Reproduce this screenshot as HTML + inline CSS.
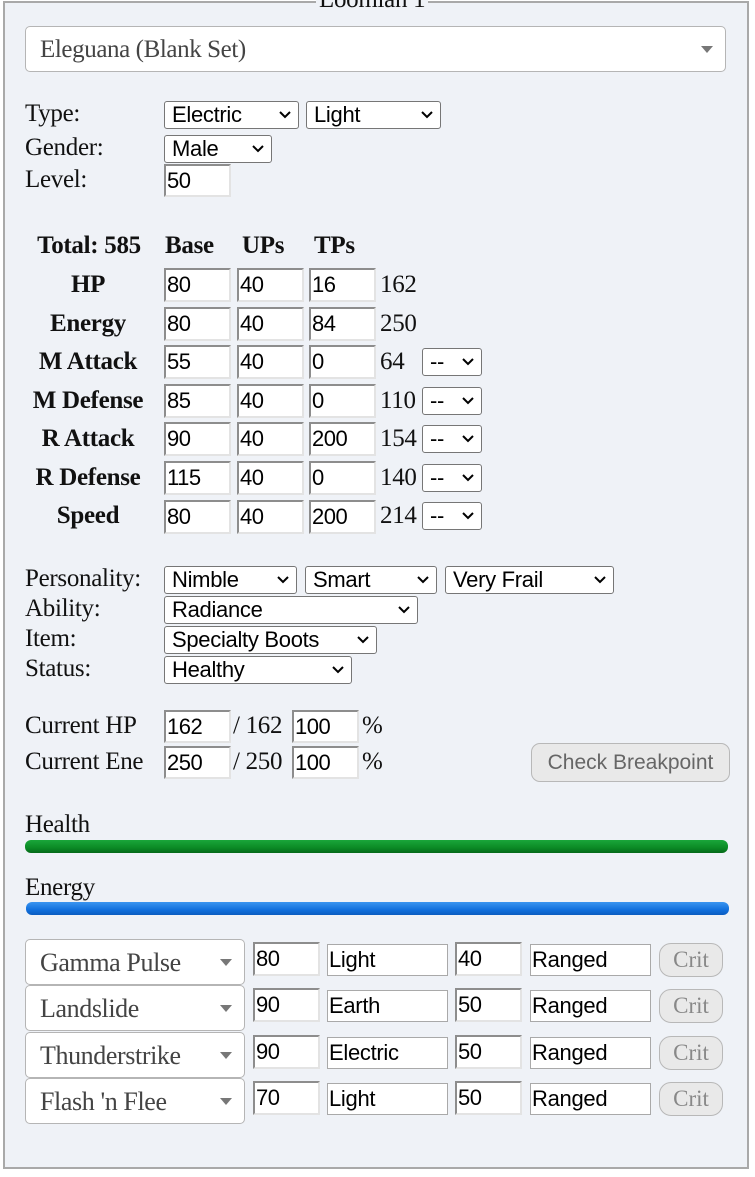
<!DOCTYPE html>
<html><head><meta charset="utf-8"><style>
*{box-sizing:border-box;margin:0;padding:0}
body{width:755px;height:1177px;background:#fff;position:relative;overflow:hidden;font-family:"Liberation Serif",serif;color:#111}
#fs{position:absolute;left:3px;top:1px;width:746px;height:1168px;background:#eff2f7;border:2px solid #a9a9a9}
.a{position:absolute}
.t{position:absolute;font-size:25px;line-height:28px;white-space:nowrap;letter-spacing:-0.3px}
.b{font-weight:bold;text-align:center;font-size:25px}
.s{position:absolute;background:#fff;border:1px solid #767676;border-radius:3px;font-family:"Liberation Sans",sans-serif;font-size:22px;padding-left:7px;white-space:nowrap;color:#000;letter-spacing:-0.3px}
.s svg{position:absolute;right:7px;top:50%;margin-top:-5px}
.i{position:absolute;background:#fff;border:2px solid;border-color:#8d8d8d #e3e3e3 #e3e3e3 #8d8d8d;font-family:"Liberation Sans",sans-serif;font-size:22px;line-height:30px;padding-left:1px;color:#000;letter-spacing:-0.5px}
.f{position:absolute;background:#fff;border:1px solid #a9a9a9;font-family:"Liberation Sans",sans-serif;font-size:22px;line-height:30px;padding-left:1px;color:#000;letter-spacing:-0.3px}
.m{position:absolute;background:#fff;border:1px solid #b5b5b5;border-radius:5px;font-size:26px;color:#444;padding-left:14px;line-height:46px;letter-spacing:-0.4px;white-space:nowrap}
.tri{position:absolute;right:12px;top:50%;margin-top:-3px;width:0;height:0;border-left:6px solid transparent;border-right:6px solid transparent;border-top:7px solid #777}
.c{position:absolute;background:#e9e9e9;border:1px solid #b8b8b8;border-radius:12px;font-size:23px;color:#888;text-align:center;line-height:32px}
</style></head><body>
<div id="fs"></div>
<div class="t" style="left:316px;top:-14px;background:#eff2f7;padding:0 3px">Loomian 1</div>

<div class="m" style="left:25px;top:26px;width:701px;height:46px;font-size:25px">Eleguana (Blank Set)<div class="tri" style="right:12px"></div></div>

<div class="t" style="left:25px;top:100px">Type:</div>
<div class="t" style="left:25px;top:134px">Gender:</div>
<div class="t" style="left:25px;top:166px">Level:</div>
<div class="s" style="left:164px;top:101px;width:135px;height:28px;line-height:26px">Electric<svg width="12" height="10" viewBox="0 0 12 10"><path d="M1 2l5 5 5-5" fill="none" stroke="#000" stroke-width="2"/></svg></div>
<div class="s" style="left:306px;top:101px;width:135px;height:28px;line-height:26px">Light<svg width="12" height="10" viewBox="0 0 12 10"><path d="M1 2l5 5 5-5" fill="none" stroke="#000" stroke-width="2"/></svg></div>
<div class="s" style="left:164px;top:135px;width:108px;height:28px;line-height:26px">Male<svg width="12" height="10" viewBox="0 0 12 10"><path d="M1 2l5 5 5-5" fill="none" stroke="#000" stroke-width="2"/></svg></div>
<div class="i" style="left:164px;top:164px;width:67px;height:33px">50</div>

<div class="t b" style="left:30px;top:232px;width:118px">Total: 585</div>
<div class="t b" style="left:165px;top:232px">Base</div>
<div class="t b" style="left:242px;top:232px">UPs</div>
<div class="t b" style="left:314px;top:232px">TPs</div>

<div class="t b" style="left:20px;top:271px;width:136px">HP</div>
<div class="i" style="left:164px;top:268px;width:67px;height:34px">80</div><div class="i" style="left:237px;top:268px;width:67px;height:34px">40</div><div class="i" style="left:309px;top:268px;width:67px;height:34px">16</div><div class="t" style="left:380px;top:271px">162</div>

<div class="t b" style="left:20px;top:310px;width:136px">Energy</div>
<div class="i" style="left:164px;top:307px;width:67px;height:34px">80</div><div class="i" style="left:237px;top:307px;width:67px;height:34px">40</div><div class="i" style="left:309px;top:307px;width:67px;height:34px">84</div><div class="t" style="left:380px;top:310px">250</div>

<div class="t b" style="left:20px;top:348px;width:136px">M Attack</div>
<div class="i" style="left:164px;top:345px;width:67px;height:34px">55</div><div class="i" style="left:237px;top:345px;width:67px;height:34px">40</div><div class="i" style="left:309px;top:345px;width:67px;height:34px">0</div><div class="t" style="left:380px;top:348px">64</div>
<div class="s" style="left:422px;top:348px;width:60px;height:28px;line-height:26px">--<svg width="12" height="10" viewBox="0 0 12 10"><path d="M1 2l5 5 5-5" fill="none" stroke="#000" stroke-width="2"/></svg></div>

<div class="t b" style="left:20px;top:387px;width:136px">M Defense</div>
<div class="i" style="left:164px;top:384px;width:67px;height:34px">85</div><div class="i" style="left:237px;top:384px;width:67px;height:34px">40</div><div class="i" style="left:309px;top:384px;width:67px;height:34px">0</div><div class="t" style="left:380px;top:387px">110</div>
<div class="s" style="left:422px;top:387px;width:60px;height:28px;line-height:26px">--<svg width="12" height="10" viewBox="0 0 12 10"><path d="M1 2l5 5 5-5" fill="none" stroke="#000" stroke-width="2"/></svg></div>

<div class="t b" style="left:20px;top:425px;width:136px">R Attack</div>
<div class="i" style="left:164px;top:422px;width:67px;height:34px">90</div><div class="i" style="left:237px;top:422px;width:67px;height:34px">40</div><div class="i" style="left:309px;top:422px;width:67px;height:34px">200</div><div class="t" style="left:380px;top:425px">154</div>
<div class="s" style="left:422px;top:425px;width:60px;height:28px;line-height:26px">--<svg width="12" height="10" viewBox="0 0 12 10"><path d="M1 2l5 5 5-5" fill="none" stroke="#000" stroke-width="2"/></svg></div>

<div class="t b" style="left:20px;top:464px;width:136px">R Defense</div>
<div class="i" style="left:164px;top:461px;width:67px;height:34px">115</div><div class="i" style="left:237px;top:461px;width:67px;height:34px">40</div><div class="i" style="left:309px;top:461px;width:67px;height:34px">0</div><div class="t" style="left:380px;top:464px">140</div>
<div class="s" style="left:422px;top:464px;width:60px;height:28px;line-height:26px">--<svg width="12" height="10" viewBox="0 0 12 10"><path d="M1 2l5 5 5-5" fill="none" stroke="#000" stroke-width="2"/></svg></div>

<div class="t b" style="left:20px;top:502px;width:136px">Speed</div>
<div class="i" style="left:164px;top:500px;width:67px;height:34px">80</div><div class="i" style="left:237px;top:500px;width:67px;height:34px">40</div><div class="i" style="left:309px;top:500px;width:67px;height:34px">200</div><div class="t" style="left:380px;top:502px">214</div>
<div class="s" style="left:422px;top:502px;width:60px;height:28px;line-height:26px">--<svg width="12" height="10" viewBox="0 0 12 10"><path d="M1 2l5 5 5-5" fill="none" stroke="#000" stroke-width="2"/></svg></div>

<div class="t" style="left:25px;top:565px">Personality:</div>
<div class="t" style="left:25px;top:595px">Ability:</div>
<div class="t" style="left:25px;top:625px">Item:</div>
<div class="t" style="left:25px;top:655px">Status:</div>
<div class="s" style="left:164px;top:566px;width:133px;height:28px;line-height:26px">Nimble<svg width="12" height="10" viewBox="0 0 12 10"><path d="M1 2l5 5 5-5" fill="none" stroke="#000" stroke-width="2"/></svg></div>
<div class="s" style="left:305px;top:566px;width:132px;height:28px;line-height:26px">Smart<svg width="12" height="10" viewBox="0 0 12 10"><path d="M1 2l5 5 5-5" fill="none" stroke="#000" stroke-width="2"/></svg></div>
<div class="s" style="left:445px;top:566px;width:169px;height:28px;line-height:26px">Very Frail<svg width="12" height="10" viewBox="0 0 12 10"><path d="M1 2l5 5 5-5" fill="none" stroke="#000" stroke-width="2"/></svg></div>
<div class="s" style="left:164px;top:596px;width:254px;height:28px;line-height:26px">Radiance<svg width="12" height="10" viewBox="0 0 12 10"><path d="M1 2l5 5 5-5" fill="none" stroke="#000" stroke-width="2"/></svg></div>
<div class="s" style="left:164px;top:626px;width:213px;height:28px;line-height:26px">Specialty Boots<svg width="12" height="10" viewBox="0 0 12 10"><path d="M1 2l5 5 5-5" fill="none" stroke="#000" stroke-width="2"/></svg></div>
<div class="s" style="left:164px;top:656px;width:188px;height:28px;line-height:26px">Healthy<svg width="12" height="10" viewBox="0 0 12 10"><path d="M1 2l5 5 5-5" fill="none" stroke="#000" stroke-width="2"/></svg></div>

<div class="t" style="left:25px;top:712px">Current HP</div>
<div class="i" style="left:164px;top:710px;width:67px;height:33px">162</div>
<div class="t" style="left:233px;top:712px">/ 162</div>
<div class="i" style="left:292px;top:710px;width:67px;height:33px">100</div>
<div class="t" style="left:362px;top:712px">%</div>
<div class="t" style="left:25px;top:748px">Current Ene</div>
<div class="i" style="left:164px;top:746px;width:67px;height:33px">250</div>
<div class="t" style="left:233px;top:748px">/ 250</div>
<div class="i" style="left:292px;top:746px;width:67px;height:33px">100</div>
<div class="t" style="left:362px;top:748px">%</div>
<div class="c" style="left:531px;top:743px;width:199px;height:39px;line-height:37px;border-radius:9px;font-family:'Liberation Sans',sans-serif;font-size:21px;color:#666">Check Breakpoint</div>

<div class="t" style="left:25px;top:811px">Health</div>
<div class="a" style="left:25px;top:840px;width:703px;height:13px;border-radius:6px;background:linear-gradient(#1aa63a,#0b8a25 60%,#066a1a)"></div>
<div class="t" style="left:25px;top:874px">Energy</div>
<div class="a" style="left:26px;top:902px;width:703px;height:13px;border-radius:6px;background:linear-gradient(#3a95f0,#1170dd 60%,#0b5cc0)"></div>

<div class="m" style="left:25px;top:939px;width:220px;height:46px">Gamma Pulse<div class="tri"></div></div>
<div class="i" style="left:253px;top:942px;width:67px;height:34px">80</div>
<div class="f" style="left:327px;top:944px;width:121px;height:32px">Light</div>
<div class="i" style="left:455px;top:942px;width:67px;height:34px">40</div>
<div class="f" style="left:530px;top:944px;width:121px;height:32px">Ranged</div>
<div class="c" style="left:659px;top:943px;width:64px;height:34px">Crit</div>

<div class="m" style="left:25px;top:985px;width:220px;height:46px">Landslide<div class="tri"></div></div>
<div class="i" style="left:253px;top:988px;width:67px;height:34px">90</div>
<div class="f" style="left:327px;top:990px;width:121px;height:32px">Earth</div>
<div class="i" style="left:455px;top:988px;width:67px;height:34px">50</div>
<div class="f" style="left:530px;top:990px;width:121px;height:32px">Ranged</div>
<div class="c" style="left:659px;top:989px;width:64px;height:34px">Crit</div>

<div class="m" style="left:25px;top:1032px;width:220px;height:46px">Thunderstrike<div class="tri"></div></div>
<div class="i" style="left:253px;top:1035px;width:67px;height:34px">90</div>
<div class="f" style="left:327px;top:1037px;width:121px;height:32px">Electric</div>
<div class="i" style="left:455px;top:1035px;width:67px;height:34px">50</div>
<div class="f" style="left:530px;top:1037px;width:121px;height:32px">Ranged</div>
<div class="c" style="left:659px;top:1036px;width:64px;height:34px">Crit</div>

<div class="m" style="left:25px;top:1078px;width:220px;height:46px">Flash 'n Flee<div class="tri"></div></div>
<div class="i" style="left:253px;top:1081px;width:67px;height:34px">70</div>
<div class="f" style="left:327px;top:1083px;width:121px;height:32px">Light</div>
<div class="i" style="left:455px;top:1081px;width:67px;height:34px">50</div>
<div class="f" style="left:530px;top:1083px;width:121px;height:32px">Ranged</div>
<div class="c" style="left:659px;top:1082px;width:64px;height:34px">Crit</div>
</body></html>
